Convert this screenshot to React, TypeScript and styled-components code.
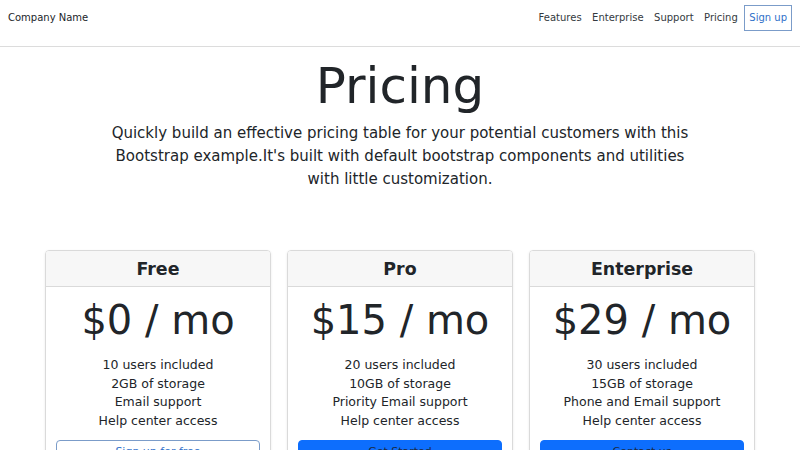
import styled, { createGlobalStyle } from 'styled-components';

const GlobalStyle = createGlobalStyle`
  html, body {
    margin: 0;
    padding: 0;
    background: #fff;
    color: #212529;
    font-family: "DejaVu Sans", "Liberation Sans", sans-serif;
  }
  * { box-sizing: border-box; }
`;

const NavBar = styled.header`
  display: flex;
  align-items: flex-start;
  justify-content: space-between;
  height: 47px;
  padding: 5px 8px 0 8px;
  border-bottom: 1px solid #dcdcdc;
  font-size: 10px;
`;

const Brand = styled.div`
  color: #212529;
  line-height: 26px;
`;

const NavLinks = styled.nav`
  display: flex;
  align-items: center;
  gap: 10.5px;
  line-height: 26px;
`;

const NavLink = styled.a`
  color: #343a40;
  text-decoration: none;
`;

const SignUp = styled.a`
  color: #2f6fc9;
  text-decoration: none;
  border: 1px solid #7b9cc9;
  height: 26px;
  padding: 0 4px;
  margin-left: -4px;
  line-height: 24px;
`;

const Hero = styled.section`
  display: flex;
  flex-direction: column;
  align-items: center;
  text-align: center;
  padding-top: 9px;
`;

const Title = styled.h1`
  margin: 0;
  font-size: 50px;
  font-weight: 400;
  line-height: 60px;
`;

const Lead = styled.p`
  margin: 6px 0 0;
  max-width: 590px;
  font-size: 15px;
  line-height: 23px;
`;

const Deck = styled.div`
  display: grid;
  grid-template-columns: repeat(3, 1fr);
  gap: 16px;
  width: 710px;
  margin: 59px 0 0 45px;
`;

const Card = styled.div`
  border: 1px solid #dadada;
  border-radius: 4px;
  box-shadow: 0 1px 3px rgba(0, 0, 0, 0.08);
  text-align: center;
  overflow: hidden;
`;

const CardHeader = styled.div`
  height: 36px;
  display: flex;
  align-items: center;
  justify-content: center;
  background: #f7f7f7;
  border-bottom: 1px solid #dadada;
  font-size: 17.4px;
  font-weight: 700;
`;

const CardBody = styled.div`
  padding: 5px 10px 12px;
`;

const Price = styled.div`
  font-size: 40px;
  line-height: 56px;
`;

const Features = styled.ul`
  list-style: none;
  margin: 8px 0 10px;
  padding: 0;
  font-size: 12.5px;
  line-height: 18.6px;
`;

const Button = styled.button<{ $outline?: boolean }>`
  display: block;
  width: 100%;
  padding: 3px 0 8px;
  border-radius: 4px;
  font-family: inherit;
  font-size: 11px;
  line-height: 16.5px;
  border: 1px solid ${({ $outline }) => ($outline ? '#7b9cc9' : '#0d6efd')};
  background: ${({ $outline }) => ($outline ? '#fff' : '#0d6efd')};
  color: ${({ $outline }) => ($outline ? '#2f6fc9' : '#1b2a44')};
`;

const plans = [
  {
    name: 'Free',
    price: '$0',
    features: ['10 users included', '2GB of storage', 'Email support', 'Help center access'],
    cta: 'Sign up for free',
    outline: true,
  },
  {
    name: 'Pro',
    price: '$15',
    features: ['20 users included', '10GB of storage', 'Priority Email support', 'Help center access'],
    cta: 'Get Started',
    outline: false,
  },
  {
    name: 'Enterprise',
    price: '$29',
    features: ['30 users included', '15GB of storage', 'Phone and Email support', 'Help center access'],
    cta: 'Contact us',
    outline: false,
  },
];

export default function App() {
  return (
    <>
      <GlobalStyle />
      <NavBar>
        <Brand>Company Name</Brand>
        <NavLinks>
          <NavLink href="#">Features</NavLink>
          <NavLink href="#">Enterprise</NavLink>
          <NavLink href="#">Support</NavLink>
          <NavLink href="#">Pricing</NavLink>
          <SignUp href="#">Sign up</SignUp>
        </NavLinks>
      </NavBar>
      <Hero>
        <Title>Pricing</Title>
        <Lead>
          Quickly build an effective pricing table for your potential customers with this Bootstrap
          example.It's built with default bootstrap components and utilities with little customization.
        </Lead>
      </Hero>
      <Deck>
        {plans.map((p) => (
          <Card key={p.name}>
            <CardHeader>{p.name}</CardHeader>
            <CardBody>
              <Price>{p.price} / mo</Price>
              <Features>
                {p.features.map((f) => (
                  <li key={f}>{f}</li>
                ))}
              </Features>
              <Button $outline={p.outline}>{p.cta}</Button>
            </CardBody>
          </Card>
        ))}
      </Deck>
    </>
  );
}
